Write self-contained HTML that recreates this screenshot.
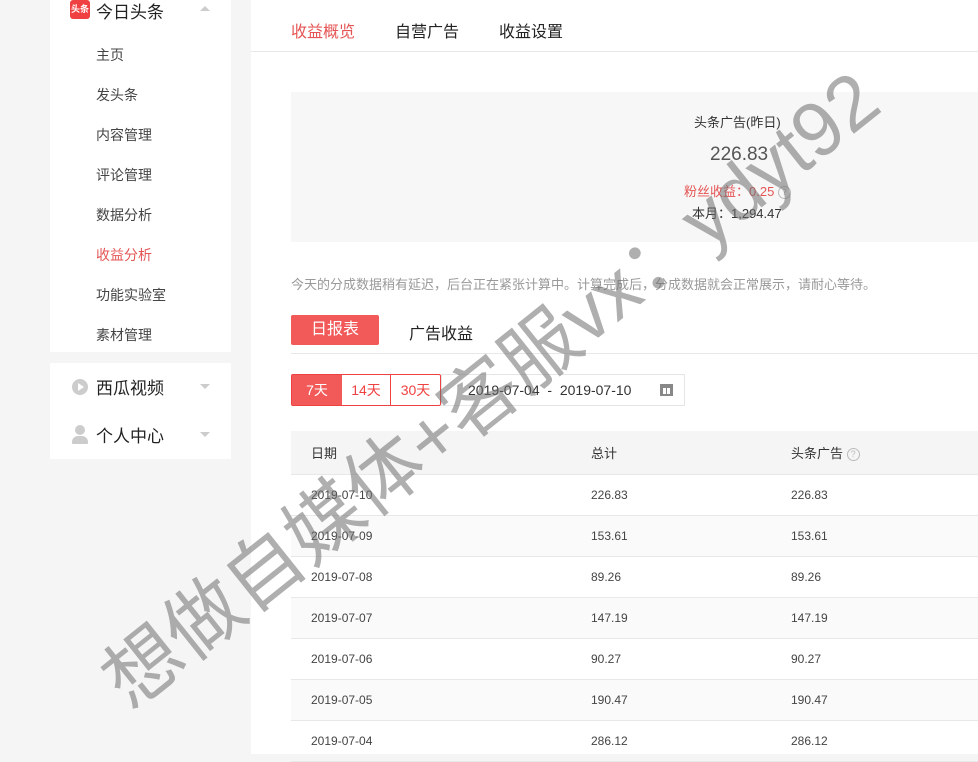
<!DOCTYPE html>
<html><head><meta charset="utf-8"><style>
*{margin:0;padding:0;box-sizing:border-box}
body{width:978px;height:754px;overflow:hidden;background:#f5f5f5;font-family:"Liberation Sans","Noto Sans CJK SC",sans-serif;font-size:13px;color:#333;position:relative}
.side{position:absolute;left:50px;top:0;width:181px;background:#fff}
.s1{height:352px}
.s2{top:363px;height:96px}
.hd{position:absolute;left:46px;font-size:17px;color:#222}
.logo{position:absolute;left:20px;top:0;width:20px;height:19px;background:#f04142;border-radius:3px;color:#fff;font-size:9px;line-height:19px;text-align:center;font-weight:bold}
.it{position:absolute;left:46px;font-size:14px;color:#444}
.arr{position:absolute;left:150px;width:0;height:0;border-left:5px solid transparent;border-right:5px solid transparent}
.main{position:absolute;left:251px;top:0;width:727px;height:754px;background:#fff}
.tabs{position:absolute;left:0;top:0;width:727px;height:52px;border-bottom:1px solid #e8e8e8}
.tab{position:absolute;top:18px;font-size:16px;color:#222}
.card{position:absolute;left:40px;top:92px;width:687px;height:150px;background:#f7f7f7;text-align:center}
.abs{position:absolute}
.red{color:#f04142}
.q{display:inline-block;width:13px;height:13px;border:1px solid #bbb;border-radius:50%;font-size:9px;line-height:11px;color:#bbb;text-align:center;vertical-align:middle}
table{position:absolute;left:40px;top:431px;width:687px;border-collapse:collapse}
td{height:41px;border-bottom:1px solid #e8e8e8;font-size:12px;color:#444;padding-left:20px}
tr.h td{height:43px;background:#f5f5f5;font-size:13px;color:#333}
tr.g td{background:#fafafa}
.wm{position:absolute;left:487px;top:385px;transform:translate(-50%,-50%) rotate(-38.6deg);white-space:nowrap;font-size:77px;color:rgba(110,110,110,0.55);font-family:"Liberation Sans","Noto Sans CJK SC",sans-serif}
</style></head><body>
<div class="side s1">
 <div class="logo">头条</div>
 <div class="hd" style="top:-2px">今日头条</div>
 <div class="arr" style="top:6px;border-bottom:5px solid #ccc"></div>
 <div class="it" style="top:45px">主页</div>
 <div class="it" style="top:85px">发头条</div>
 <div class="it" style="top:125px">内容管理</div>
 <div class="it" style="top:165px">评论管理</div>
 <div class="it" style="top:205px">数据分析</div>
 <div class="it red" style="top:245px;color:#e55454">收益分析</div>
 <div class="it" style="top:285px">功能实验室</div>
 <div class="it" style="top:325px">素材管理</div>
</div>
<div class="side s2">
 <div class="abs" style="left:22px;top:16px;width:16px;height:16px;border-radius:50%;background:#ccc"></div>
 <div class="abs" style="left:28px;top:20px;width:0;height:0;border-top:4px solid transparent;border-bottom:4px solid transparent;border-left:6px solid #fff"></div>
 <div class="hd" style="top:11px">西瓜视频</div>
 <div class="arr" style="top:21px;border-top:5px solid #ccc"></div>
 <div class="abs" style="left:25px;top:62px;width:10px;height:10px;border-radius:50%;background:#ccc"></div>
 <div class="abs" style="left:22px;top:73px;width:16px;height:8px;border-radius:6px 6px 1px 1px;background:#ccc"></div>
 <div class="hd" style="top:59px">个人中心</div>
 <div class="arr" style="top:69px;border-top:5px solid #ccc"></div>
</div>
<div class="main">
 <div class="tabs">
  <div class="tab" style="left:40px;color:#e55454">收益概览</div>
  <div class="tab" style="left:144px">自营广告</div>
  <div class="tab" style="left:248px">收益设置</div>
 </div>
 <div class="card">
  <div class="abs" style="left:0;width:100%;top:20px;font-size:13px;text-align:left;padding-left:403px">头条广告(昨日)</div>
  <div class="abs" style="left:419px;top:52px;font-size:19px;color:#555">226.83</div>
  <div class="abs" style="left:393px;top:89px;font-size:13px;color:#e55454">粉丝收益：0.25 <span class="q">?</span></div>
  <div class="abs" style="left:401px;top:111px;font-size:13px;color:#333">本月：1,294.47</div>
 </div>
 <div class="abs" style="left:40px;top:274px;font-size:13px;color:#999">今天的分成数据稍有延迟，后台正在紧张计算中。计算完成后，分成数据就会正常展示，请耐心等待。</div>
 <div class="abs" style="left:40px;top:315px;width:88px;height:30px;background:#f25a5a;border-radius:2px;color:#fff;font-size:16px;line-height:30px;text-align:center">日报表</div>
 <div class="abs" style="left:158px;top:320px;font-size:16px;color:#222">广告收益</div>
 <div class="abs" style="left:40px;top:353px;width:687px;height:1px;background:#e8e8e8"></div>
 <div class="abs" style="left:40px;top:374px;width:150px;height:32px;border:1px solid #f04142;border-radius:2px;display:flex;font-size:14px;line-height:30px">
  <div style="width:50px;background:#f25a5a;color:#fff;text-align:center">7天</div>
  <div style="width:49px;color:#f04142;text-align:center;border-right:1px solid #f04142">14天</div>
  <div style="width:49px;color:#f04142;text-align:center">30天</div>
 </div>
 <div class="abs" style="left:190px;top:374px;width:244px;height:32px;border:1px solid #e5e5e5;font-size:14px;line-height:30px;padding-left:26px;color:#333">2019-07-04 &nbsp;-&nbsp; 2019-07-10</div>
 <div class="abs" style="left:409px;top:384px;width:13px;height:12px;border:2px solid #888;border-top-width:4px;background:repeating-linear-gradient(90deg,#888 0 1px,#fff 1px 4px)"></div>
 <table>
  <tr class="h"><td style="width:280px">日期</td><td style="width:200px">总计</td><td>头条广告 <span class="q">?</span></td></tr>
  <tr><td>2019-07-10</td><td>226.83</td><td>226.83</td></tr>
  <tr class="g"><td>2019-07-09</td><td>153.61</td><td>153.61</td></tr>
  <tr><td>2019-07-08</td><td>89.26</td><td>89.26</td></tr>
  <tr class="g"><td>2019-07-07</td><td>147.19</td><td>147.19</td></tr>
  <tr><td>2019-07-06</td><td>90.27</td><td>90.27</td></tr>
  <tr class="g"><td>2019-07-05</td><td>190.47</td><td>190.47</td></tr>
  <tr><td>2019-07-04</td><td>286.12</td><td>286.12</td></tr>
 </table>
</div>
<div class="wm">想做自媒体+客服vx：ydyt92</div>
</body></html>
